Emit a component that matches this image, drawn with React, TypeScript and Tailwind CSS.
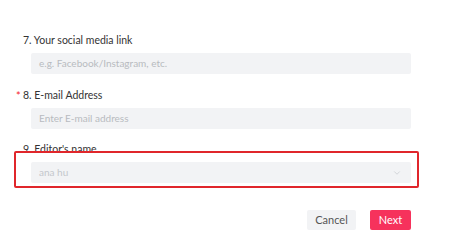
import { ChevronDown } from "lucide-react";

const font = { fontFamily: 'Lato, "Noto Sans", "Liberation Sans", sans-serif' };

function Label({ children, required }: { children: React.ReactNode; required?: boolean }) {
  return (
    <div className="relative pl-[23px] text-[10.5px] leading-[14px] text-[#333]">
      {required && (
        <span className="absolute left-[16px] top-[1px] text-[11px] text-[#f5222d]">*</span>
      )}
      {children}
    </div>
  );
}

function Field({ placeholder }: { placeholder: string }) {
  return (
    <div className="ml-[31px] flex h-[21px] w-[380px] items-center rounded-[2px] bg-[#f2f3f5] px-[8px] text-[10px] text-[#b8bbc0]">
      {placeholder}
    </div>
  );
}

export default function App() {
  return (
    <div className="relative h-[244px] w-[474px] overflow-hidden bg-white" style={font}>
      <div className="flex flex-col pt-[33px]">
        <Label>7. Your social media link</Label>
        <div className="mt-[6px]">
          <Field placeholder="e.g. Facebook/Instagram, etc." />
        </div>

        <div className="mt-[14px]">
          <Label required>8. E-mail Address</Label>
        </div>
        <div className="mt-[6px]">
          <Field placeholder="Enter E-mail address" />
        </div>

        <div className="mt-[13px]">
          <Label>9. Editor's name</Label>
        </div>
        <div className="ml-[31px] mt-[6px] flex h-[21px] w-[380px] items-center justify-between rounded-[2px] bg-[#f2f3f5] px-[8px] text-[10px] text-[#c4c7cc]">
          <span>ana hu</span>
          <ChevronDown size={10} strokeWidth={1.5} className="mr-[1px] text-[#bfc2c7]" />
        </div>

        <div className="mr-[63px] mt-[27px] flex justify-end gap-[14px]">
          <button className="h-[20px] w-[49px] rounded-[2px] bg-[#f2f3f5] text-[11px] text-[#555]">
            Cancel
          </button>
          <button className="h-[20px] w-[41px] rounded-[2px] bg-[#f6325c] text-[11px] text-white">
            Next
          </button>
        </div>
      </div>

      {/* annotation box */}
      <div className="absolute left-[14px] top-[151px] h-[37px] w-[405px] rounded-[2px] border-2 border-[#e0262b]" />
    </div>
  );
}
